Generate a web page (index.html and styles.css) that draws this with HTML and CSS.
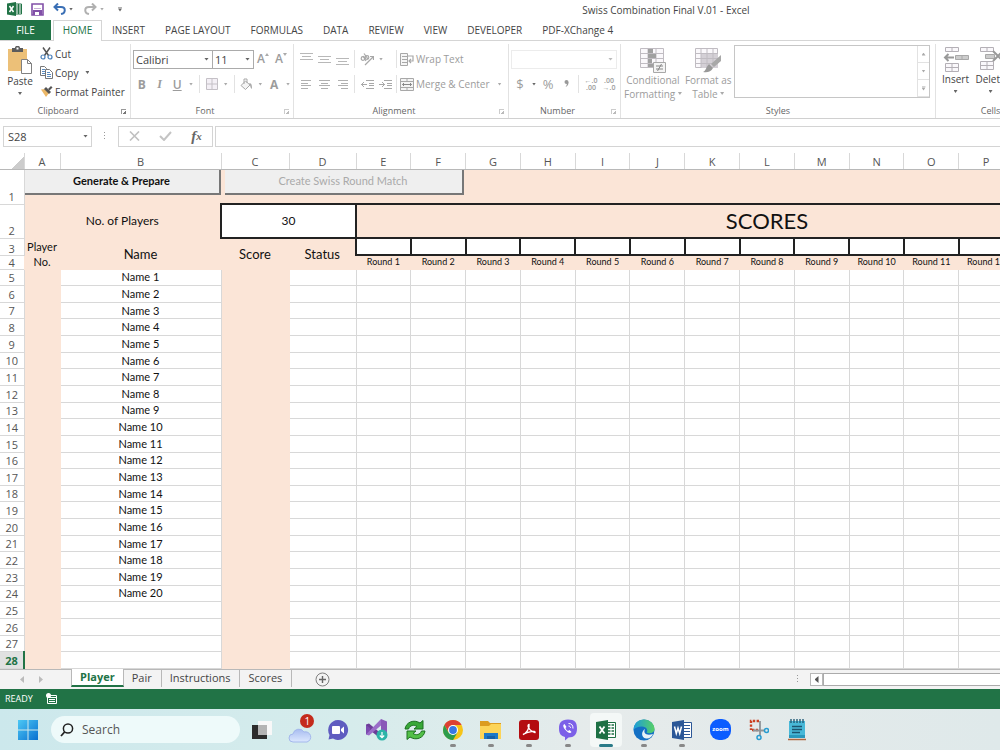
FILE: index.html
```html
<!DOCTYPE html>
<html lang="en">
<head>
    <meta charset="UTF-8">
    <meta name="viewport" content="width=device-width, initial-scale=1.0">
    <title>Swiss Combination Final V.01 - Excel</title>
    <link rel="stylesheet" href="styles.css">
</head>
<body>

    <!-- Title bar -->
    <header class="titlebar">
        <div class="quick-access">
            <svg class="excel-logo" width="15" height="14" viewBox="0 0 15 14"><path d="M8 2h6.500v10H8z" fill="#fff" stroke="#217346"/><path d="M9 4h5M9 6h5M9 8h5M9 10h5M11.500 2v10" stroke="#217346"/><path d="M0 1.500 9 0v14l-9-1.500z" fill="#217346"/><path d="M2.500 4l4 6M6.500 4l-4 6" stroke="#fff" stroke-width="1.500"/></svg>
            <button class="btn" aria-label="Save"><svg width="13" height="13" viewBox="0 0 13 13"><path d="M1 1h11v11H1z" fill="#fff" stroke="#8250a8" stroke-width="1.600"/><path d="M2 7h9v5H2z" fill="#8250a8"/><path d="M4 9h4v3H4z" fill="#fff"/><path d="M3 5.500h7" stroke="#c8b0d8"/></svg></button>
            <button class="btn" aria-label="Undo"><svg width="13" height="12" viewBox="0 0 13 12"><path d="M1.500 4h6.500c5 0 5 6 0 7" fill="none" stroke="#3a6fb5" stroke-width="2"/><path d="M5 0.500 1.500 4 5 7.500" fill="none" stroke="#3a6fb5" stroke-width="2"/></svg><i class="caret"></i></button>
            <button class="btn" aria-label="Redo"><svg width="13" height="12" viewBox="0 0 13 12"><path d="M11.500 4H5c-5 0-5 6 0 7" fill="none" stroke="#b0b0b0" stroke-width="2"/><path d="M8 0.500 11.500 4 8 7.500" fill="none" stroke="#b0b0b0" stroke-width="2"/></svg><i class="caret light"></i></button>
            <button class="btn" aria-label="Customize"><i class="caret bar"></i></button>
        </div>
        <div class="title">Swiss Combination Final V.01 - Excel</div>
    </header>

    <!-- Ribbon tabs -->
    <nav class="tabs">
        <a href="#" class="file">FILE</a>
        <a href="#" class="active">HOME</a>
        <a href="#">INSERT</a>
        <a href="#">PAGE LAYOUT</a>
        <a href="#">FORMULAS</a>
        <a href="#">DATA</a>
        <a href="#">REVIEW</a>
        <a href="#">VIEW</a>
        <a href="#">DEVELOPER</a>
        <a href="#">PDF-XChange 4</a>
    </nav>

    <!-- Ribbon -->
    <div class="ribbon">
        <section class="group clipboard">
            <div class="group-body">
                <button class="btn big">
                    <svg width="26" height="28" viewBox="0 0 26 28"><path d="M1 3h19v22H1z" fill="#ecc078"/><path d="M5 2h3c0-3 5-3 5 0h3v4H5z" fill="#5c5c5c"/><path d="M9.500 1.500h2v2h-2z" fill="#fff"/><path d="M14.500 13.500h6l4 4v10h-10z" fill="#fff" stroke="#808080"/><path d="M20.500 13.500v4h4" fill="none" stroke="#808080"/></svg>
                    <span>Paste</span>
                    <i class="caret"></i>
                </button>
                <div class="stack">
                    <button class="btn"><svg width="13" height="13" viewBox="0 0 13 13"><path d="M3 0.500 8.500 8.500M10 0.500 4.500 8.500" stroke="#555" stroke-width="1.500"/><circle cx="3" cy="10" r="2" fill="none" stroke="#4a7fb8" stroke-width="1.200"/><circle cx="10" cy="10" r="2" fill="none" stroke="#4a7fb8" stroke-width="1.200"/></svg>Cut</button>
                    <button class="btn"><svg width="13" height="13" viewBox="0 0 13 13"><path d="M0.500 0.500h4l2 2v7h-6z" fill="#fff" stroke="#777"/><path d="M2 3.500h3M2 5.500h3M2 7.500h3" stroke="#5b8cc0"/><path d="M5.500 3.500h4l3 3v6h-7z" fill="#fff" stroke="#777"/><path d="M7 6.500h3M7 8.500h4M7 10.500h4" stroke="#5b8cc0"/></svg>Copy<i class="caret spaced"></i></button>
                    <button class="btn"><svg width="13" height="13" viewBox="0 0 13 13"><path d="M1 4.500 5 4l4 4-3 4z" fill="#ecb868"/><path d="M4 4l2-2 5 5-2 2z" fill="#555"/><path d="M8 4l3-3 1.500 1.500-3 3z" fill="#555"/></svg>Format Painter</button>
                </div>
            </div>
            <div class="group-label">Clipboard<i class="launcher dark"></i></div>
        </section>

        <section class="group font">
            <div class="group-body rows">
                <div class="row">
                    <label class="pick font-name"><select aria-label="Font"><option>Calibri</option></select></label>
                    <label class="pick font-size"><select aria-label="Font size"><option>11</option></select></label>
                    <button class="btn tool letter grow" disabled>A<i class="caret light up"></i></button>
                    <button class="btn tool letter grow" disabled>A<i class="caret light"></i></button>
                </div>
                <div class="row">
                    <button class="btn tool letter bold" disabled>B</button>
                    <button class="btn tool letter italic" disabled>I</button>
                    <button class="btn tool letter under" disabled>U</button>
                    <i class="caret light"></i>
                    <i class="sep"></i>
                    <button class="btn tool" disabled aria-label="Borders"><svg width="12" height="12" viewBox="0 0 12 12"><path d="M0.500 0.500h11v11H0.500zM6 0v12M0 6h12" fill="#f4f0f6" stroke="#c4c0c6"/></svg></button>
                    <i class="caret light"></i>
                    <i class="sep"></i>
                    <button class="btn tool" disabled aria-label="Fill color"><svg width="13" height="13" viewBox="0 0 13 13"><path d="M5.500 3 1 7.500l4.500 4L10 7z" fill="#f4f4f4" stroke="#a8a8a8"/><path d="M4 6V1h3v4" fill="none" stroke="#a8a8a8"/><path d="M9 5c3 0 3 3 3 6-2-1-1.500-3-2-4z" fill="#a8a8a8"/></svg></button>
                    <i class="caret light"></i>
                    <button class="btn tool letter bold" disabled>A</button>
                    <i class="caret light"></i>
                </div>
            </div>
            <div class="group-label">Font<i class="launcher"></i></div>
        </section>

        <section class="group alignment">
            <div class="group-body rows">
                <div class="row">
                    <button class="btn tool" disabled aria-label="Top align"><svg width="13" height="13" viewBox="0 0 13 13"><path d="M0 0.500h13M2 3.500h9M0 6.500h13" stroke="#b8b8b8"/></svg></button>
                    <button class="btn tool" disabled aria-label="Middle align"><svg width="13" height="13" viewBox="0 0 13 13"><path d="M0 3.500h13M2 6.500h9M0 9.500h13" stroke="#b8b8b8"/></svg></button>
                    <button class="btn tool" disabled aria-label="Bottom align"><svg width="13" height="13" viewBox="0 0 13 13"><path d="M0 5.500h13M2 8.500h9M0 11.500h13" stroke="#b8b8b8"/></svg></button>
                    <i class="sep"></i>
                    <button class="btn tool" disabled aria-label="Orientation"><svg width="14" height="13" viewBox="0 0 14 13"><path d="M5 12l8-8M10 3.500h3.500V7" fill="none" stroke="#a8a8a8" stroke-width="1.200"/><circle cx="3" cy="5.500" r="1.800" fill="none" stroke="#a8a8a8" stroke-width="1.200"/><circle cx="7" cy="4.500" r="1.800" fill="none" stroke="#a8a8a8" stroke-width="1.200"/><path d="M3 3l3 5M4 0.500l4 5.500" stroke="#a8a8a8" stroke-width="1.200"/></svg></button>
                    <i class="caret light"></i>
                    <i class="sep push"></i>
                    <button class="btn wide" disabled><svg width="14" height="13" viewBox="0 0 14 13"><path d="M0.500 0.500h7v12h-7z" fill="#f6f6f6" stroke="#a8a8a8"/><path d="M2 3.500h6M2 6.500h5M2 9.500h5" stroke="#a8a8a8"/><path d="M7 3h6v5H9M11 6 9 8l2 2" fill="none" stroke="#a8a8a8" stroke-width="1.200"/></svg>Wrap Text</button>
                </div>
                <div class="row">
                    <button class="btn tool" disabled aria-label="Align left"><svg width="11" height="9" viewBox="0 0 11 9"><path d="M0 0.500h10M0 3.500h7M0 5.500h10M0 8.500h7" stroke="#b0b0b0"/></svg></button>
                    <button class="btn tool" disabled aria-label="Center"><svg width="11" height="9" viewBox="0 0 11 9"><path d="M0 0.500h11M2 3.500h7M0 5.500h11M2 8.500h7" stroke="#b0b0b0"/></svg></button>
                    <button class="btn tool" disabled aria-label="Align right"><svg width="11" height="9" viewBox="0 0 11 9"><path d="M1 0.500h10M4 3.500h7M1 5.500h10M4 8.500h7" stroke="#b0b0b0"/></svg></button>
                    <i class="sep"></i>
                    <button class="btn tool" disabled aria-label="Decrease indent"><svg width="13" height="9" viewBox="0 0 13 9"><path d="M0 4.500h6M3 2 0.500 4.500 3 7M5 0.500h8M8 3.500h5M8 5.500h5M5 8.500h8" fill="none" stroke="#a8a8a8"/></svg></button>
                    <button class="btn tool" disabled aria-label="Increase indent"><svg width="13" height="9" viewBox="0 0 13 9"><path d="M0 4.500h6M3 2 5.500 4.500 3 7M5 0.500h8M8 3.500h5M8 5.500h5M5 8.500h8" fill="none" stroke="#a8a8a8"/></svg></button>
                    <i class="sep push"></i>
                    <button class="btn wide" disabled><svg width="14" height="13" viewBox="0 0 14 13"><path d="M0.500 0.500h13v12H0.500zM0 3.500h14M0 9.500h14M7 0v3.500M7 9.500V13" fill="#f4f4f4" stroke="#a8a8a8"/><path d="M2.500 6.500h9M4 5 2.500 6.500 4 8M10 5l1.500 1.500L10 8" fill="none" stroke="#888"/></svg>Merge &amp; Center<i class="caret light"></i></button>
                </div>
            </div>
            <div class="group-label">Alignment<i class="launcher"></i></div>
        </section>

        <section class="group number">
            <div class="group-body rows">
                <div class="row">
                    <label class="pick format light"><select aria-label="Number format" disabled><option></option></select></label>
                </div>
                <div class="row">
                    <button class="btn tool symbol" disabled>$</button>
                    <i class="caret"></i>
                    <button class="btn tool symbol" disabled>%</button>
                    <button class="btn tool" disabled aria-label="Comma style"><svg width="5" height="8" viewBox="0 0 5 8"><circle cx="2.500" cy="2" r="2" fill="#999"/><path d="M4.500 2c0 3-1 4-3 5 1-1.500 1.500-2.500 1.500-4z" fill="#999"/></svg></button>
                    <i class="sep"></i>
                    <button class="btn tool digits" disabled>&#8592;.0<br>.00</button>
                    <button class="btn tool digits" disabled>.00<br>&#8594;.0</button>
                </div>
            </div>
            <div class="group-label">Number<i class="launcher"></i></div>
        </section>

        <section class="group styles">
            <div class="group-body">
                <button class="btn big" disabled>
                    <svg width="26" height="25" viewBox="0 0 26 25"><path d="M0.500 0.500h23v19H0.500zM0 5.500h24M0 10.500h24M0 15.500h24M8 0v20M16 0v20" fill="#faf8fb" stroke="#c0bcc2"/><path d="M8 1h5v4H8zM8 6h8v4H8zM8 11h4v4H8zM8 16h5v3H8z" fill="#a0a0a0"/><path d="M13.500 14.500h12v10h-12z" fill="#f4f4f4" stroke="#a8a8a8"/><path d="M16 18h7M16 21h7M21.500 16l-4 7" stroke="#888"/></svg>
                    <span>Conditional<br>Formatting <i class="caret light"></i></span>
                </button>
                <button class="btn big" disabled>
                    <svg width="26" height="25" viewBox="0 0 26 25"><path d="M0.500 0.500h22v19H0.500z" fill="#faf8fb" stroke="#c0bcc2"/><path d="M6 5h17v15H6z" fill="#d4d0d6"/><path d="M0 5.500h23M0 10.500h23M0 15.500h23M6 0v20M12 0v20M18 0v20" stroke="#c0bcc2"/><path d="M26 7v6l-7 6-3-3z" fill="#a8a8a8"/><path d="M14 16l4 4c-2 4-6 5-10 4 3-1 3-5 6-8z" fill="#999"/></svg>
                    <span>Format as<br>Table <i class="caret light"></i></span>
                </button>
                <div class="gallery">
                    <div class="gallery-nav">
                        <button class="btn" disabled aria-label="Previous styles"><i class="caret light up"></i></button>
                        <button class="btn" disabled aria-label="Next styles"><i class="caret light"></i></button>
                        <button class="btn" disabled aria-label="More styles"><i class="caret light bar"></i></button>
                    </div>
                </div>
            </div>
            <div class="group-label">Styles</div>
        </section>

        <section class="group cells">
            <div class="group-body">
                <button class="btn big">
                    <svg width="26" height="25" viewBox="0 0 26 25"><path d="M2.500 0.500h13v4h-13zM9 0v5M2.500 16.500h13v8h-13zM2 20.500h14M9 16v9" fill="#faf8fb" stroke="#b4b0b6"/><path d="M12.500 8.500h13v4h-13z" fill="#ccc" stroke="#a8a8a8"/><path d="M19 8v5" stroke="#a8a8a8"/><path d="M11 10.500H2M5.500 7 2 10.500 5.500 14" fill="none" stroke="#999" stroke-width="2"/></svg>
                    <span>Insert</span>
                    <i class="caret"></i>
                </button>
                <button class="btn big">
                    <svg width="26" height="25" viewBox="0 0 26 25"><path d="M2.500 0.500h13v4h-13zM9 0v5M2.500 14.500h13v8h-13zM2 18.500h14M9 14v9" fill="#faf8fb" stroke="#b4b0b6"/><path d="M7.500 7.500h9v4h-9z" fill="#ccc" stroke="#a8a8a8"/><path d="M15 4l10 10M25 4 15 14" stroke="#999" stroke-width="2"/></svg>
                    <span>Delete</span>
                    <i class="caret"></i>
                </button>
            </div>
            <div class="group-label">Cells</div>
        </section>
    </div>

    <!-- Formula bar -->
    <div class="formula-bar">
        <label class="pick name-box"><input type="text" value="S28" aria-label="Name box"></label>
        <i class="dots"></i>
        <div class="fx">
            <button class="btn" disabled aria-label="Cancel"><svg width="11" height="10" viewBox="0 0 11 10"><path d="M1 0.500l9 9M10 0.500l-9 9" stroke="#c0c0c0" stroke-width="1.600"/></svg></button>
            <button class="btn" disabled aria-label="Enter"><svg width="13" height="10" viewBox="0 0 13 10"><path d="M1 5l4 4 7-8" fill="none" stroke="#c4c4c4" stroke-width="2"/></svg></button>
            <button class="btn fx-letter" aria-label="Insert function">f<sub>x</sub></button>
        </div>
        <input class="formula" type="text" aria-label="Formula">
    </div>

    <!-- Worksheet -->
    <main class="sheet">
        <table id="grid">
            <colgroup id="cols">
                <col class="col-head"><col class="col-a"><col class="col-b"><col class="col-c"><col class="col-d">
            </colgroup>
            <thead>
                <tr id="letters"><th class="corner"></th></tr>
            </thead>
            <tbody id="rows">
                <tr class="r1">
                    <th>1</th>
                    <td colspan="2" class="peach"><button class="sheet-btn">Generate &amp; Prepare</button></td>
                    <td colspan="4" class="peach"><button class="sheet-btn second" disabled>Create Swiss Round Match</button></td>
                    <td colspan="13" class="peach"></td>
                </tr>
                <tr class="r2">
                    <th>2</th>
                    <td colspan="2" class="peach players">No. of Players</td>
                    <td colspan="2" class="boxed players">30</td>
                    <td colspan="15" class="peach boxed scores">SCORES</td>
                </tr>
                <tr class="r3" id="boxes">
                    <th>3</th>
                    <td rowspan="2" class="peach player-no">Player No.</td>
                    <td rowspan="2" class="peach heading">Name</td>
                    <td rowspan="2" class="peach heading">Score</td>
                    <td rowspan="2" class="peach heading">Status</td>
                </tr>
                <tr class="r4" id="rounds"><th>4</th></tr>
            </tbody>
        </table>
    </main>

    <!-- Sheet tabs -->
    <div class="sheet-bar">
        <div class="sheet-nav">
            <button class="btn" disabled aria-label="Previous sheet"><i class="arrow left"></i></button>
            <button class="btn" disabled aria-label="Next sheet"><i class="arrow right"></i></button>
        </div>
        <nav class="sheet-tabs">
            <a href="#" class="active">Player</a>
            <a href="#">Pair</a>
            <a href="#">Instructions</a>
            <a href="#">Scores</a>
        </nav>
        <button class="btn add-sheet" aria-label="New sheet"><svg width="15" height="15" viewBox="0 0 15 15"><circle cx="7.500" cy="7.500" r="6.500" fill="none" stroke="#808080"/><path d="M4 7.500h7M7.500 4v7" stroke="#666" stroke-width="1.400"/></svg></button>
        <i class="dots"></i>
        <div class="scroll">
            <button class="btn" aria-label="Scroll left"><i class="arrow left dark"></i></button>
            <div class="thumb"></div>
        </div>
    </div>

    <div class="status">
        <span>READY</span>
        <svg width="11" height="11" viewBox="0 0 11 11"><path d="M1.500 2.500h9v8h-9z" fill="none" stroke="#fff"/><path d="M1 4.500h10M3 6.500h6M3 8.500h6" stroke="#fff"/><circle cx="2.500" cy="2.500" r="2.500" fill="#fff"/></svg>
    </div>

    <!-- Windows taskbar -->
    <footer class="taskbar">
        <button class="btn start" aria-label="Start"><svg width="20" height="20" viewBox="0 0 20 20"><defs><linearGradient id="win" x1="0" y1="0" x2="1" y2="1"><stop offset="0" stop-color="#4cc8f4"/><stop offset="1" stop-color="#0a70d0"/></linearGradient></defs><path d="M0 0h9.500v9.500H0zM10.500 0H20v9.500h-9.500zM0 10.500h9.500V20H0zM10.500 10.500H20V20h-9.500z" fill="url(#win)"/></svg></button>
        <label class="search">
            <svg width="14" height="14" viewBox="0 0 14 14"><circle cx="8" cy="5.500" r="4.600" fill="none" stroke="#222" stroke-width="1.500"/><path d="M4.600 9 1 13" stroke="#222" stroke-width="1.800"/></svg>
            <input type="text" placeholder="Search" aria-label="Search">
        </label>
        <div class="apps">
            <button class="btn" aria-label="Task view"><svg width="22" height="22" viewBox="0 0 22 22"><path d="M7 2h14v14H7z" fill="#f8f8f8"/><path d="M1 6h15v14H1z" fill="#2c2c2c"/><path d="M7 6h9v10H7z" fill="#b4b4b4"/></svg></button>
            <button class="btn badge-host" aria-label="Weather"><svg width="24" height="22" viewBox="0 0 24 22"><defs><linearGradient id="cloud" x1="0" y1="0" x2="0" y2="1"><stop offset="0" stop-color="#a8bcf0"/><stop offset="1" stop-color="#dce8fe"/></linearGradient></defs><path d="M5 20a4 4 0 0 1 0-8 6 6 0 0 1 11-2 5 5 0 0 1 3 10z" fill="url(#cloud)" stroke="#a4b8ec"/></svg><span class="badge">1</span></button>
            <button class="btn" aria-label="Chat"><svg width="22" height="22" viewBox="0 0 22 22"><path d="M11 1a10 10 0 1 1-5 18.600L1.500 20.500l1-4.500A10 10 0 0 1 11 1z" fill="#5f5cc0"/><rect x="5" y="7" width="8" height="8" rx="1" fill="#fff"/><path d="M14 10l3-2.500v7L14 12z" fill="#fff"/></svg></button>
            <button class="btn" aria-label="Visual Studio"><svg width="22" height="22" viewBox="0 0 22 22"><path d="M0 5.500 3 4.500l12 10V20L0 8z" fill="#6c3c98"/><path d="M0 15.500V6l4 3v5.500z" fill="#7c4ab0"/><path d="M3 16.500 0 15.500 15 0v6.500z" fill="#9a6cc8"/><path d="M15 0l6 2.500v16L15 21z" fill="#8a58b8"/><circle cx="16" cy="16" r="5.500" fill="#2cb4a8"/><path d="M16 13v5.500M13.800 16.500 16 18.700l2.200-2.200" fill="none" stroke="#fff" stroke-width="1.200"/></svg></button>
            <button class="btn" aria-label="Sync"><svg width="22" height="20" viewBox="0 0 22 20"><path d="M1 9C2 2 10-1 16 3l3-2.500V9h-9l3-2.500C10 4.500 6 5 4.500 9z" fill="#38a838" stroke="#1c7020"/><path d="M21 11c-1 7-9 10-15 6l-3 2.500V11h9l-3 2.500c3 2 7 1.500 8.500-2.500z" fill="#52c048" stroke="#1c7020"/></svg></button>
            <button class="btn running" aria-label="Chrome"><svg width="22" height="22" viewBox="0 0 22 22"><circle cx="11" cy="11" r="10" fill="#f6c418"/><path d="M2.340 6A10 10 0 0 1 19.660 6H11L6.500 13z" fill="#dc4034"/><path d="M2.340 6A10 10 0 0 0 11 21l4.500-7.500-9 0z" fill="#2c9c4c"/><circle cx="11" cy="11" r="5" fill="#fff"/><circle cx="11" cy="11" r="3.900" fill="#3878e4"/></svg></button>
            <button class="btn running" aria-label="File Explorer"><svg width="22" height="20" viewBox="0 0 22 20"><path d="M0 1h8l2 2h11v16H0z" fill="#dc9c20"/><path d="M0 6h9l2-2h10v15H0z" fill="#fcd458"/><path d="M4 13h14v6H4z" fill="#1c78c8"/><path d="M7 16h8v3H7z" fill="#1460a8"/></svg></button>
            <button class="btn running" aria-label="Acrobat"><svg width="20" height="20" viewBox="0 0 20 20"><rect width="20" height="20" rx="3" fill="#b40c10"/><path d="M4 14.500c3-1 7-6 6-10-2 0-1 6 6 8 1-2-7-1-12 2z" fill="none" stroke="#fff" stroke-width="1.400"/></svg></button>
            <button class="btn running" aria-label="Viber"><svg width="20" height="22" viewBox="0 0 20 22"><path d="M10 0.500c7 0 9 3 9 9s-3 9-8.500 9L7 21.500V18C3 17 1 15 1 9.500S3 0.500 10 0.500z" fill="#7c60e8"/><path d="M6.500 5c-2 1-1.500 3 1 6s5 4 6 2l-2-2-1.500 1c-1-.5-2-1.500-2.500-3l1-1z" fill="#fff"/><path d="M10.500 4.500c3 0 4.500 1.500 4.500 5M10.500 7c1.500 0 2 1 2 2" fill="none" stroke="#fff"/></svg></button>
            <button class="btn running current" aria-label="Excel"><svg width="20" height="20" viewBox="0 0 20 20"><path d="M10 2.500h9.500v15H10z" fill="#fff" stroke="#1d7044"/><path d="M12 5h6M12 8h6M12 11h6M12 14h6" stroke="#1d7044" stroke-width="1.600"/><path d="M15 3v14" stroke="#fff"/><path d="M0 2 12 0v20L0 18z" fill="#1d7044"/><path d="M3.500 6.500l5 7M8.500 6.500l-5 7" stroke="#fff" stroke-width="1.800"/></svg></button>
            <button class="btn running" aria-label="Edge"><svg width="22" height="22" viewBox="0 0 22 22"><defs><linearGradient id="edge" x1="0" y1="0" x2="1" y2="0"><stop offset="0" stop-color="#1c9cdc"/><stop offset="1" stop-color="#58d064"/></linearGradient></defs><circle cx="11" cy="11" r="10.500" fill="#1470c4"/><path d="M0.500 11C1 4 5 .5 11 .5S21.500 5 21.500 10c0 4-5 5-8 3.500 2-2 0-6-4.500-6C5 7.500 2 9 .5 11z" fill="url(#edge)"/><path d="M12 10c-2 4 1 7 8 5-1 3-4 5-7 4.500-5-1-5-7-1-9.500z" fill="#e8f2f6"/></svg></button>
            <button class="btn running" aria-label="Word"><svg width="20" height="20" viewBox="0 0 20 20"><path d="M10 2.500h9.500v15H10z" fill="#fff" stroke="#2b5797"/><path d="M12 5.500h6M12 8.500h6M12 11.500h6M12 14.500h6" stroke="#2b5797"/><path d="M0 2 12 0v20L0 18z" fill="#2b5797"/><path d="M2.500 6.500 4.300 13.500 6 8l1.700 5.500 1.800-7" fill="none" stroke="#fff" stroke-width="1.500"/></svg></button>
            <button class="btn" aria-label="Zoom"><span class="zoom-app">zoom</span></button>
            <button class="btn" aria-label="Snipping tool"><svg width="20" height="22" viewBox="0 0 20 22"><path d="M10 2H2v9M3 11h6" fill="none" stroke="#cc4020" stroke-width="2.400" stroke-dasharray="2.400 1.400"/><path d="M11 2v15M4 11.500h12" stroke="#909498" stroke-width="1.800"/><circle cx="10" cy="18.500" r="2" fill="none" stroke="#289cd0" stroke-width="1.500"/><circle cx="17.500" cy="11.500" r="2" fill="none" stroke="#289cd0" stroke-width="1.500"/></svg></button>
            <button class="btn" aria-label="Notepad"><svg width="18" height="22" viewBox="0 0 18 22"><path d="M1 2h16v17H1z" fill="#48b8d8"/><path d="M1 16h16v3H1z" fill="#2a98bc"/><path d="M0 20.500h18" stroke="#b06840" stroke-width="1.500"/><path d="M3 0v4M6 0v4M9 0v4M12 0v4M15 0v4" stroke="#225c78" stroke-width="1.400"/><path d="M4 7.500h10M4 10.500h10M4 13.500h8" stroke="#1c5470" stroke-width="1.400"/></svg></button>
        </div>
    </footer>

    <script>
        const SCORE_COLS = 15;
        const ROUNDS = 12;
        const LAST_ROW = 28;
        const PLAYERS = 20;

        const cols = document.getElementById('cols');
        const letters = document.getElementById('letters');
        const boxes = document.getElementById('boxes');
        const rounds = document.getElementById('rounds');
        const rows = document.getElementById('rows');

        function addCell(row, tag, text, className) {
            const cell = document.createElement(tag);
            cell.textContent = text;
            cell.className = className;
            row.appendChild(cell);
        }

        for (let i = 0; i < SCORE_COLS; i++) {
            cols.appendChild(document.createElement('col'));
        }

        // Column letters
        for (let i = 0; i < ROUNDS + 4; i++) {
            addCell(letters, 'th', String.fromCharCode(65 + i), '');
        }

        // Round columns
        for (let i = 1; i <= ROUNDS; i++) {
            addCell(boxes, 'td', '', 'boxed');
            addCell(rounds, 'td', 'Round ' + i, 'peach round');
        }

        // Player rows
        for (let r = 5; r <= LAST_ROW; r++) {
            const row = document.createElement('tr');
            const player = r - 4;
            addCell(row, 'th', r, r === LAST_ROW ? 'selected' : '');
            addCell(row, 'td', '', 'peach');
            addCell(row, 'td', player <= PLAYERS ? 'Name ' + player : '', '');
            addCell(row, 'td', '', 'peach');
            for (let i = 0; i <= ROUNDS; i++) {
                addCell(row, 'td', '', '');
            }
            rows.appendChild(row);
        }
    </script>

</body>
</html>
```
FILE: styles.css
```css
* {
    box-sizing: border-box;
}

body {
    margin: 0;
    height: 100vh;
    display: flex;
    flex-direction: column;
    overflow: hidden;
    background: #fff;
    color: #444;
    font-family: "Open Sans", "Noto Sans", sans-serif;
    font-size: 10px;
}

button, input, select {
    font: inherit;
    color: inherit;
}

a {
    color: inherit;
    text-decoration: none;
}

svg {
    display: block;
    flex: none;
}

.btn {
    display: flex;
    align-items: center;
    justify-content: center;
    padding: 0;
    border: 0;
    background: none;
    white-space: nowrap;
}

.btn:disabled {
    color: #9c9c9c;
}

/* Small arrows */
.caret {
    display: inline-block;
    flex: none;
    width: 4px;
    height: 3px;
    margin: 0 3px;
    background: #666;
    clip-path: polygon(0 0, 100% 0, 50% 100%);
}

.caret.light {
    background: #aaa;
}

.caret.up {
    clip-path: polygon(0 100%, 100% 100%, 50% 0);
}

.caret.bar {
    height: 5px;
    clip-path: polygon(0 0, 100% 0, 100% 20%, 0 20%, 0 40%, 100% 40%, 50% 100%, 0 40%);
}

.arrow {
    width: 4px;
    height: 7px;
    background: #bbb;
}

.arrow.dark {
    background: #555;
}

.arrow.left {
    clip-path: polygon(100% 0, 100% 100%, 0 50%);
}

.arrow.right {
    clip-path: polygon(0 0, 100% 50%, 0 100%);
}

.dots {
    width: 1px;
    height: 9px;
    background: repeating-linear-gradient(#999 0 1px, transparent 1px 3px);
}

/* Title bar */
.titlebar {
    display: flex;
    align-items: center;
    height: 20px;
    flex: none;
}

.quick-access {
    display: flex;
    align-items: center;
    gap: 9px;
    width: 332px;
    padding: 0 0 2px 7px;
}

.quick-access .btn + .btn {
    margin-right: -1px;
}

.title {
    flex: 1;
    text-align: center;
}

/* Ribbon tabs */
.tabs {
    display: flex;
    height: 21px;
    flex: none;
    border-bottom: 1px solid #d5d5d5;
    line-height: 20px;
}

.tabs a {
    padding: 0 10px;
}

.tabs .file {
    width: 51px;
    margin-right: 2px;
    padding: 0;
    background: #217346;
    color: #fff;
    text-align: center;
}

.tabs .active {
    width: 49px;
    height: 21px;
    padding: 0;
    border: 1px solid #d5d5d5;
    border-bottom: 0;
    background: #fff;
    color: #217346;
    text-align: center;
    line-height: 19px;
}

/* Ribbon */
.ribbon {
    display: flex;
    height: 78px;
    flex: none;
    overflow: hidden;
    border-bottom: 1px solid #d0d0d0;
}

.group {
    display: flex;
    flex-direction: column;
    flex: none;
    margin-top: 3px;
    border-right: 1px solid #e2e2e2;
}

.group-body {
    display: flex;
    height: 60px;
}

.group-label {
    position: relative;
    padding-right: 14px;
    font-size: 9px;
    line-height: 14px;
    text-align: center;
    color: #666;
}

.launcher {
    position: absolute;
    right: 4px;
    bottom: 4px;
    width: 5px;
    height: 5px;
    border-top: 1px solid #ccc;
    border-left: 1px solid #ccc;
    background: linear-gradient(135deg, transparent 60%, #bbb 60%);
}

.launcher.dark {
    border-color: #999;
    background: linear-gradient(135deg, transparent 60%, #777 60%);
}

.rows {
    flex-direction: column;
    gap: 5px;
    padding-top: 5px;
}

.row {
    display: flex;
    align-items: center;
    height: 20px;
}

.big {
    flex-direction: column;
    justify-content: flex-start;
    line-height: 14px;
}

.big > .caret {
    margin-top: 4px;
}

.big span .caret {
    margin: 0 0 3px;
}

.stack {
    display: flex;
    flex-direction: column;
    align-items: flex-start;
}

.stack .btn {
    height: 19px;
    gap: 2px;
}

.stack .spaced {
    margin-left: 5px;
}

.tool {
    width: 18px;
    height: 18px;
}

.letter {
    font-size: 12px;
    font-weight: 600;
}

.grow {
    align-items: flex-start;
    line-height: 18px;
}

.grow .caret {
    margin: 3px 0 0;
}

.bold {
    font-weight: 700;
}

.italic {
    font-family: "Liberation Serif", serif;
    font-style: italic;
}

.under {
    text-decoration: underline;
}

.symbol {
    font-size: 13px;
}

.digits {
    font-size: 7px;
    font-weight: 600;
    line-height: 7px;
}

.sep {
    width: 1px;
    height: 18px;
    margin: 0 3px;
    background: #e2e2e2;
}

.wide {
    width: 108px;
    justify-content: flex-start;
    gap: 2px;
}

.wide .caret {
    margin-left: 6px;
}

.pick {
    position: relative;
    display: flex;
    height: 19px;
}

.pick::after {
    content: "";
    position: absolute;
    right: 4px;
    top: 8px;
    width: 5px;
    height: 3px;
    background: #666;
    clip-path: polygon(0 0, 100% 0, 50% 100%);
    pointer-events: none;
}

.pick.light::after {
    background: #bbb;
}

.pick select,
.pick input {
    appearance: none;
    width: 100%;
    padding: 0 2px;
    border: 1px solid #ababab;
    border-radius: 0;
    background: #fff;
    font-size: 11px;
}

.pick.light select {
    border-color: #e4e4e4;
}

.clipboard {
    width: 131px;
}

.clipboard .big {
    width: 40px;
    padding-top: 2px;
}

.font {
    width: 163px;
}

.font .row {
    padding-left: 2px;
}

.font-name {
    width: 80px;
}

.font-size {
    width: 42px;
    margin-left: -1px;
}

.alignment {
    width: 215px;
}

.alignment .row {
    padding-left: 3px;
}

.alignment .push {
    margin-left: auto;
}

.number {
    width: 112px;
}

.number .row {
    padding-left: 2px;
}

.format {
    width: 106px;
}

.styles {
    width: 315px;
}

.styles .group-body {
    gap: 3px;
    padding: 1px 5px 0 3px;
}

.styles .group-label,
.cells .group-label {
    padding-right: 0;
}

.styles .big {
    padding-top: 3px;
}

.gallery {
    display: flex;
    justify-content: flex-end;
    flex: 1;
    height: 53px;
    border: 1px solid #c6c6c6;
}

.gallery-nav {
    display: flex;
    flex-direction: column;
    width: 12px;
    border-left: 1px solid #e2e2e2;
}

.gallery-nav .btn {
    flex: 1;
    border-bottom: 1px solid #e2e2e2;
}

.cells {
    width: 110px;
}

.cells .big {
    width: 35px;
    padding-top: 3px;
}

.cells .group-body {
    padding-left: 2px;
}

/* Formula bar */
.formula-bar {
    display: flex;
    align-items: center;
    height: 34px;
    flex: none;
    padding-left: 3px;
}

.name-box {
    width: 89px;
    height: 21px;
}

.name-box input {
    padding: 0 4px;
}

.name-box::after {
    top: 9px;
}

.name-box input,
.fx,
.formula {
    border: 1px solid #d4d4d4;
}

.formula-bar .dots {
    margin: 0 13px 0 12px;
}

.fx {
    display: flex;
    width: 95px;
    height: 21px;
    margin-right: 2px;
}

.fx .btn {
    flex: 1;
}

.fx .fx-letter {
    color: #666;
    font-family: "Liberation Serif", serif;
    font-size: 15px;
    font-weight: 700;
    font-style: italic;
}

.fx-letter sub {
    font-size: 11px;
}

.formula {
    flex: 1;
    min-width: 0;
    height: 21px;
    border-right: 0;
}

/* Worksheet */
.sheet {
    flex: 1;
    min-height: 0;
    overflow: hidden;
}

table {
    width: calc(100% + 179px);
    height: 100%;
    table-layout: fixed;
    border-collapse: collapse;
    color: #111;
    font-family: Lato, sans-serif;
    font-size: 11px;
    line-height: 14px;
    text-align: center;
}

.col-head {
    width: 24px;
}

.col-a {
    width: 36px;
}

.col-b {
    width: 161px;
}

.col-c {
    width: 68px;
}

.col-d {
    width: 67px;
}

th, td {
    padding: 0;
    border: 1px solid #d8d8d8;
}

th {
    color: #555;
    font-family: "Open Sans", sans-serif;
    font-weight: 400;
    vertical-align: bottom;
}

th:first-child {
    border-left: 0;
}

thead th {
    height: 16px;
    border-top: 0;
    border-bottom-color: #b8b8b8;
}

.corner {
    background: linear-gradient(135deg, transparent 70%, #ccc 70%);
}

.selected {
    border-right: 2px solid #217346;
    background: #e1e1e1;
    color: #217346;
    font-weight: 700;
}

.peach {
    border-color: #fbe5d7;
    background: #fbe5d7;
}

.r1 {
    height: 35px;
}

.r2 {
    height: 34px;
}

.r3 {
    height: 17px;
}

.r4 {
    height: 14px;
}

.r3 th,
.r4 th {
    line-height: 12px;
}

.r1 td {
    vertical-align: top;
}

.boxed {
    border: 2px solid #222;
}

.players {
    font-size: 12px;
}

.scores {
    font-size: 22px;
    line-height: 26px;
}

.heading {
    font-size: 13px;
}

.player-no {
    line-height: 15px;
}

.round {
    font-size: 9px;
    line-height: 12px;
}

.sheet-btn {
    display: block;
    width: 100%;
    height: 25px;
    padding: 0;
    border: 0;
    border-right: 2px solid #777;
    border-bottom: 2px solid #777;
    background: #efefef;
    font-weight: 700;
}

.sheet-btn.second {
    width: 239px;
    margin-left: 3px;
    color: #aaa;
    font-weight: 400;
}

/* Sheet tabs */
.sheet-bar {
    display: flex;
    align-items: center;
    height: 20px;
    flex: none;
    border-top: 1px solid #b8b8b8;
    background: #f3f3f3;
}

.sheet-nav {
    display: flex;
    gap: 15px;
    width: 71px;
    padding-left: 20px;
}

.sheet-tabs {
    display: flex;
    align-self: flex-start;
    font-size: 11px;
    line-height: 16px;
}

.sheet-tabs a {
    padding: 0 9px 0 8px;
    border-right: 1px solid #b8b8b8;
}

.sheet-tabs .active {
    height: 18px;
    margin-top: -1px;
    padding: 0 8px;
    border-left: 1px solid #b8b8b8;
    border-bottom: 2px solid #217346;
    background: #fff;
    color: #217346;
    font-weight: 700;
}

.add-sheet {
    margin-left: 23px;
}

.sheet-bar .dots {
    margin: 0 12px 0 auto;
}

.scroll {
    display: flex;
    width: 190px;
    height: 13px;
}

.scroll .btn {
    width: 13px;
    border: 1px solid #b8b8b8;
    background: #fff;
}

.thumb {
    flex: 1;
    border: 1px solid #ababab;
    border-right: 0;
    background: #fff;
}

/* Status bar */
.status {
    display: flex;
    align-items: center;
    gap: 13px;
    height: 20px;
    flex: none;
    padding: 0 0 2px 5px;
    background: #217346;
    color: #fff;
    font-size: 9px;
}

/* Taskbar */
.taskbar {
    display: flex;
    align-items: center;
    height: 41px;
    flex: none;
    padding-left: 18px;
    background: linear-gradient(90deg, #cce8ec, #d6ecec 35%, #e6ebeb 60%, #dfe9ea);
}

.search {
    display: flex;
    align-items: center;
    gap: 7px;
    width: 189px;
    height: 27px;
    margin: 0 3px 0 13px;
    padding-left: 9px;
    border-radius: 14px;
    background: #eefafa;
}

.search input {
    flex: 1;
    min-width: 0;
    padding: 0 1px;
    border: 0;
    background: none;
    font-size: 12px;
}

.search input::placeholder {
    color: #555;
}

.apps {
    display: grid;
    grid-template-columns: repeat(15, 1fr);
    width: 573px;
    height: 34px;
}

.apps .btn {
    position: relative;
    margin: 0 3px;
}

.badge {
    position: absolute;
    top: 1px;
    right: 2px;
    width: 14px;
    height: 14px;
    border-radius: 7px;
    background: #c42b1c;
    color: #fff;
    line-height: 14px;
}

.badge-host svg {
    margin-top: 6px;
}

.running::after {
    content: "";
    position: absolute;
    bottom: 0;
    left: calc(50% - 3px);
    width: 6px;
    height: 3px;
    border-radius: 2px;
    background: #888;
}

.apps .current {
    border-radius: 4px;
    background: #f4f8f7;
}

.current::after {
    left: calc(50% - 7px);
    width: 14px;
    background: #2a7a88;
}

.zoom-app {
    width: 21px;
    height: 21px;
    border-radius: 9px;
    background: #0b5cff;
    color: #fff;
    font-size: 6px;
    font-weight: 700;
    line-height: 20px;
}
```
